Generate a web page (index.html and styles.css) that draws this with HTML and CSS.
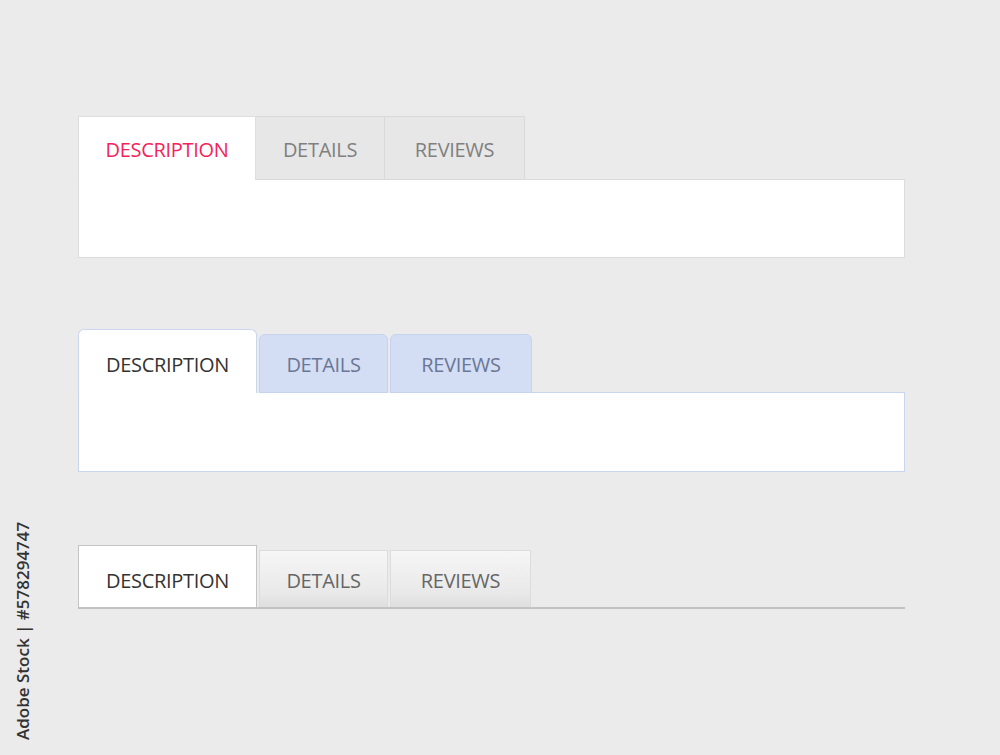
FILE: index.html
```html
<!DOCTYPE html>
<html>
<head>
<meta charset="utf-8">
<link rel="stylesheet" href="styles.css">
</head>
<body>
<main class="page">
  <section class="tabs t1">
    <div class="tablist">
      <div class="tab active">DESCRIPTION</div>
      <div class="tab">DETAILS</div>
      <div class="tab">REVIEWS</div>
      <div class="fill"></div>
    </div>
    <div class="panel"></div>
  </section>

  <section class="tabs t2">
    <div class="tablist">
      <div class="tab active">DESCRIPTION</div>
      <div class="tab">DETAILS</div>
      <div class="tab">REVIEWS</div>
      <div class="fill"></div>
    </div>
    <div class="panel"></div>
  </section>

  <section class="tabs t3">
    <div class="tablist">
      <div class="tab active">DESCRIPTION</div>
      <div class="tab">DETAILS</div>
      <div class="tab">REVIEWS</div>
      <div class="fill"></div>
    </div>
  </section>
</main>
<div class="stock">Adobe Stock | #578294747</div>
</body>
</html>
```
FILE: styles.css
```css
* { box-sizing: border-box; }
html, body { margin: 0; padding: 0; }
body {
  width: 1000px;
  height: 755px;
  background: #ebebeb;
  font-family: "Open Sans", "Noto Sans", sans-serif;
  overflow: hidden;
  position: relative;
}
.page {
  padding: 116px 0 0 78px;
  width: 905px;
}
.tablist {
  display: flex;
  align-items: flex-end;
}
.tab {
  display: flex;
  align-items: center;
  justify-content: center;
  font-size: 20px;
  letter-spacing: -0.3px;
  white-space: nowrap;
}
.fill { flex: 1; align-self: stretch; }

/* Style 1 */
.t1 .tab {
  height: 64px;
  background: #e7e7e7;
  color: #808080;
  border: 1px solid #d9d9d9;
  border-left: none;
  padding-top: 2px;
}
.t1 .tab:nth-child(2) { width: 129px; }
.t1 .tab:nth-child(3) { width: 140px; }
.t1 .tab.active {
  width: 178px;
  background: #ffffff;
  color: #f4245a;
  border: 1px solid #dedede;
  border-bottom: none;
}
.t1 .fill { border-bottom: 1px solid #dcdcdc; }
.t1 .panel {
  height: 78px;
  background: #fff;
  border: 1px solid #dcdcdc;
  border-top: none;
}

/* Style 2 */
.t2 { margin-top: 71px; }
.t2 .tab {
  height: 59px;
  margin-left: 2px;
  background: #d3ddf4;
  color: #6b7796;
  border: 1px solid #c6d2ef;
  border-radius: 6px 6px 0 0;
  padding-top: 2px;
}
.t2 .tab:nth-child(2) { width: 129px; }
.t2 .tab:nth-child(3) { width: 142px; }
.t2 .tab.active {
  margin-left: 0;
  width: 179px;
  height: 64px;
  background: #fff;
  color: #333;
  border-color: #cbd6f1;
  border-bottom: none;
  padding-top: 6px;
}
.t2 .fill { border-bottom: 1px solid #c9d5f0; }
.t2 .panel {
  height: 79px;
  background: #fff;
  border: 1px solid #c9d5f0;
  border-top: none;
}

/* Style 3 */
.t3 { margin-top: 73px; }
.t3 .tablist { border-bottom: 2px solid #c2c2c2; }
.t3 .tab {
  height: 57px;
  margin-left: 2px;
  background: linear-gradient(#f6f6f6, #e9e9e9 75%, #dedede);
  color: #666;
  border: 1px solid #dcdcdc;
  border-bottom: none;
  padding-top: 2px;
}
.t3 .tab:nth-child(2) { width: 129px; }
.t3 .tab:nth-child(3) { width: 141px; }
.t3 .tab.active {
  margin-left: 0;
  width: 179px;
  height: 62px;
  background: #fff;
  color: #333;
  border: 1px solid #c4c4c4;
  border-bottom: none;
  padding-top: 8px;
}

.stock {
  position: absolute;
  left: 13px;
  top: 740px;
  transform: rotate(-90deg);
  transform-origin: 0 0;
  font-family: "Open Sans", sans-serif;
  font-size: 17px;
  font-weight: 600;
  color: #333;
  white-space: nowrap;
  line-height: 20px;
}
```
